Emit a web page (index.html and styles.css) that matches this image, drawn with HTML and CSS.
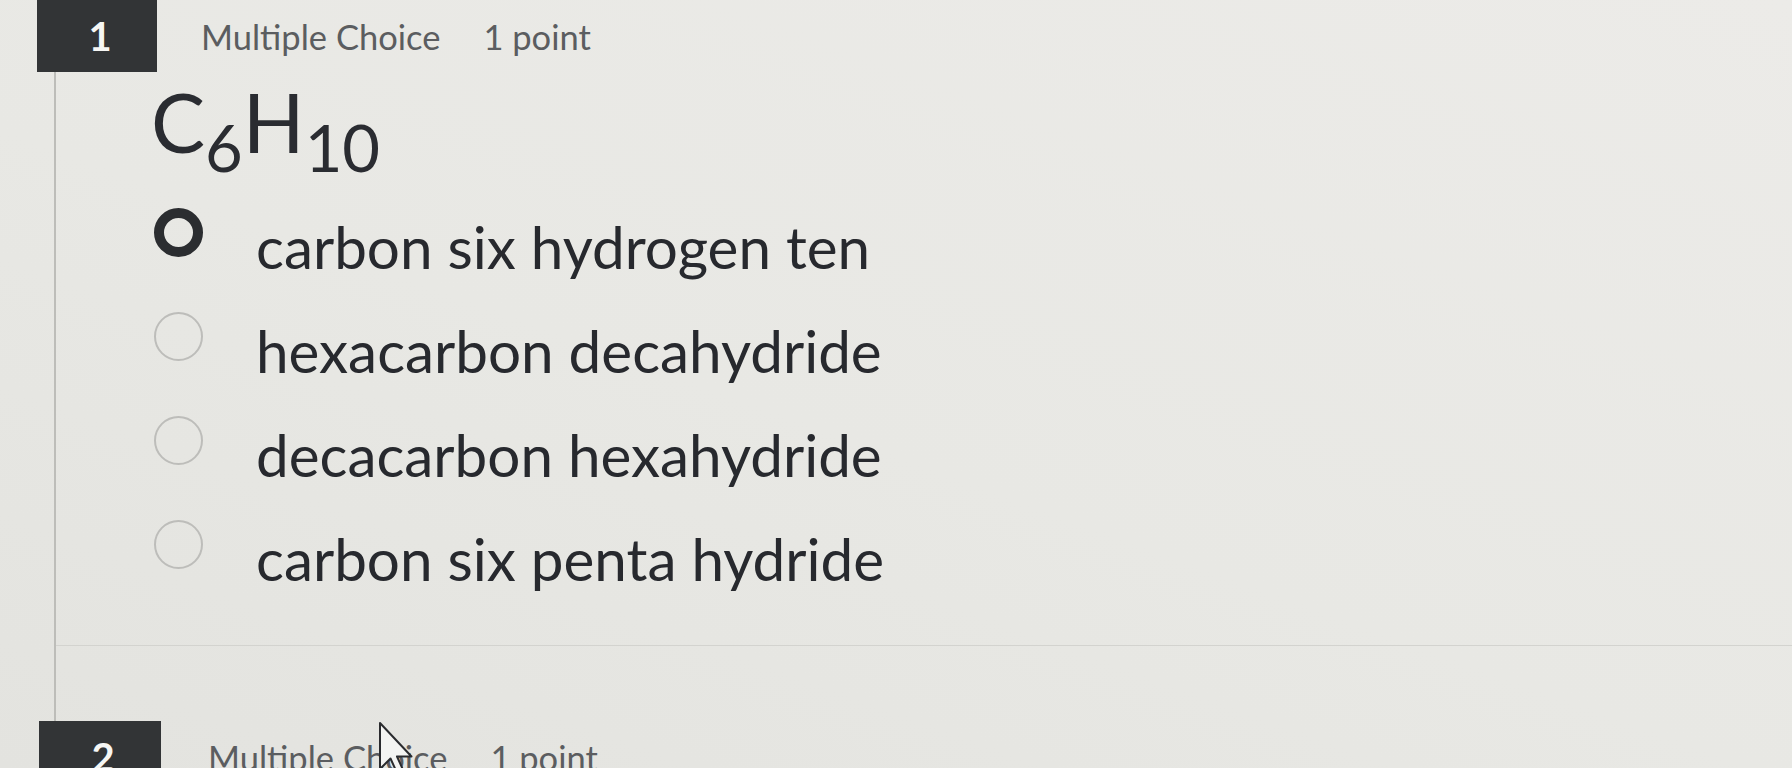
FILE: index.html
```html
<!DOCTYPE html>
<html lang="en">
<head>
<meta charset="utf-8">
<title>Quiz</title>
<link rel="stylesheet" href="styles.css">
</head>
<body>
<main class="quiz">
  <section class="question">
    <header class="q-head">
      <div class="q-num">1</div>
      <span class="q-type">Multiple Choice</span>
      <span class="q-points">1 point</span>
    </header>
    <div class="q-body">
      <div class="q-prompt">C<sub>6</sub>H<sub>10</sub></div>
      <ul class="choices">
        <li class="choice selected"><span class="radio"></span><span class="label">carbon six hydrogen ten</span></li>
        <li class="choice"><span class="radio"></span><span class="label">hexacarbon decahydride</span></li>
        <li class="choice"><span class="radio"></span><span class="label">decacarbon hexahydride</span></li>
        <li class="choice"><span class="radio"></span><span class="label">carbon six penta hydride</span></li>
      </ul>
    </div>
  </section>
  <section class="question question-next">
    <header class="q-head">
      <div class="q-num">2</div>
      <span class="q-type">Multiple Choice</span>
      <span class="q-points">1 point</span>
    </header>
  </section>
  <svg class="cursor" width="36" height="58" viewBox="-2 -2 36 58" aria-hidden="true">
    <path d="M0 0 L0 46 L10.5 35.5 L18 52 L24 49 L17 33.5 L31.5 33.5 Z" fill="#f4f4f2" stroke="#2a2b2e" stroke-width="2" stroke-linejoin="round"/>
  </svg>
</main>
</body>
</html>
```
FILE: styles.css
```css
html, body {
  margin: 0;
  padding: 0;
  height: 768px;
  overflow: hidden;
}
body {
  background: linear-gradient(20deg, #e3e3df 0%, #e8e8e4 45%, #ecebe8 100%);
  font-family: Lato, "Noto Sans", "Liberation Sans", sans-serif;
  color: #27292e;
}
.quiz {
  position: relative;
  height: 768px;
}
.q-head {
  display: flex;
  align-items: center;
  height: 72px;
}
.q-num {
  box-sizing: border-box;
  margin-left: 37px;
  width: 120px;
  height: 72px;
  padding-left: 6px;
  background: #323436;
  color: #f6f6f4;
  font-weight: 700;
  font-size: 40px;
  display: flex;
  align-items: center;
  justify-content: center;
}
.q-type {
  margin-left: 44px;
  font-size: 34.5px;
  color: #5b5d60;
}
.q-points {
  margin-left: 43px;
  font-size: 34.5px;
  color: #5b5d60;
}
.question-next .q-num {
  margin-left: 39px;
  width: 122px;
}
.question-next .q-type {
  margin-left: 47px;
}
.q-body {
  margin-left: 54px;
  border-left: 2px solid #bdbdb9;
  padding-top: 9px;
  padding-bottom: 75px;
}
.q-prompt {
  padding-left: 95px;
  font-size: 81px;
  line-height: 81px;
  height: 81px;
  color: #2a2c31;
}
.q-prompt sub {
  font-size: 65px;
  line-height: 0;
  vertical-align: -19px;
}
.choices {
  list-style: none;
  margin: 32px 0 0;
  padding: 0 0 35px 98px;
  border-bottom: 1px solid #d3d3cf;
}
.choice {
  display: flex;
  align-items: flex-start;
  height: 104px;
}
.radio {
  box-sizing: border-box;
  width: 49px;
  height: 49px;
  margin-top: 14px;
  border-radius: 50%;
  border: 2px solid #bdbdba;
  flex: none;
}
.choice.selected .radio {
  border: 10px solid #2b2d30;
}
.label {
  margin-left: 53px;
  font-size: 58.4px;
  line-height: 104px;
  color: #27292e;
}
.cursor {
  position: absolute;
  left: 378px;
  top: 721px;
}
```
